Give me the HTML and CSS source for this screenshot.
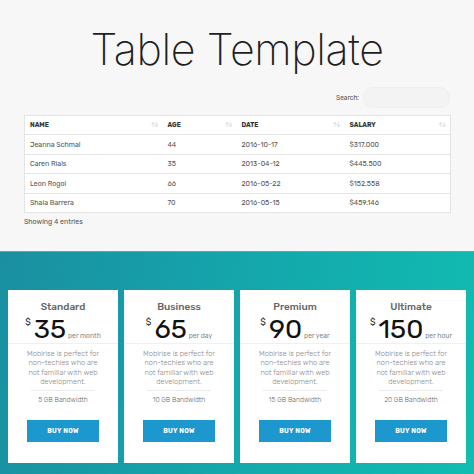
FILE: index.html
```html
<!DOCTYPE html>
<html>
<head>
<meta charset="utf-8">
<link rel="stylesheet" href="styles.css">
</head>
<body>
<section class="top">
  <h1 class="title">Table Template</h1>
  <div class="search-row">
    <span class="search-label">Search:</span>
    <div class="search-input"></div>
  </div>
  <table class="data">
    <thead>
      <tr>
        <th class="c1">NAME<span class="sort">&#8593;&#8595;</span></th>
        <th class="c2">AGE<span class="sort">&#8593;&#8595;</span></th>
        <th class="c3">DATE<span class="sort">&#8593;&#8595;</span></th>
        <th class="c4">SALARY<span class="sort">&#8593;&#8595;</span></th>
      </tr>
    </thead>
    <tbody>
      <tr><td>Jeanna Schmal</td><td>44</td><td>2016-10-17</td><td>$317.000</td></tr>
      <tr><td>Caren Rials</td><td>35</td><td>2013-04-12</td><td>$445.500</td></tr>
      <tr><td>Leon Rogol</td><td>66</td><td>2016-05-22</td><td>$152.558</td></tr>
      <tr><td>Shala Barrera</td><td>70</td><td>2016-05-15</td><td>$459.146</td></tr>
    </tbody>
  </table>
  <div class="info">Showing 4 entries</div>
</section>
<section class="pricing">
  <div class="card">
    <div class="plan">Standard</div>
    <div class="price"><span class="cur">$</span><span class="amount">35</span><span class="per">per month</span></div>
    <div class="desc">Mobirise is perfect for<br>non-techies who are<br>not familiar with web<br>development.</div>
    <div class="feature">5 GB Bandwidth</div>
    <div class="btn">BUY NOW</div>
  </div>
  <div class="card">
    <div class="plan">Business</div>
    <div class="price"><span class="cur">$</span><span class="amount">65</span><span class="per">per day</span></div>
    <div class="desc">Mobirise is perfect for<br>non-techies who are<br>not familiar with web<br>development.</div>
    <div class="feature">10 GB Bandwidth</div>
    <div class="btn">BUY NOW</div>
  </div>
  <div class="card">
    <div class="plan">Premium</div>
    <div class="price"><span class="cur">$</span><span class="amount">90</span><span class="per">per year</span></div>
    <div class="desc">Mobirise is perfect for<br>non-techies who are<br>not familiar with web<br>development.</div>
    <div class="feature">15 GB Bandwidth</div>
    <div class="btn">BUY NOW</div>
  </div>
  <div class="card">
    <div class="plan">Ultimate</div>
    <div class="price"><span class="cur">$</span><span class="amount">150</span><span class="per">per hour</span></div>
    <div class="desc">Mobirise is perfect for<br>non-techies who are<br>not familiar with web<br>development.</div>
    <div class="feature">20 GB Bandwidth</div>
    <div class="btn">BUY NOW</div>
  </div>
</section>
</body>
</html>
```

FILE: styles.css
```css
* { box-sizing: border-box; }
html, body { margin: 0; padding: 0; }
body {
  width: 474px;
  height: 474px;
  overflow: hidden;
  font-family: "Rubik", "Inter", "Roboto", sans-serif;
  background: #f7f7f7;
}
.top {
  background: #f7f7f7;
  padding: 27px 24px 0;
  height: 251px;
}
.title {
  margin: 0;
  font-family: "Inter", sans-serif;
  font-weight: 250;
  font-size: 43px;
  line-height: 45px;
  text-align: center;
  color: #1e1e1e;
  letter-spacing: -0.4px;
}
.search-row {
  margin-top: 15px;
  display: flex;
  justify-content: flex-end;
  align-items: center;
  gap: 4px;
  height: 21px;
}
.search-label {
  font-size: 6.5px;
  color: #555;
}
.search-input {
  width: 87px;
  height: 21px;
  border-radius: 10px;
  background: #f3f3f3;
  border: 1px solid #efefef;
}
.data {
  margin-top: 7px;
  width: 426px;
  border-collapse: collapse;
  background: #fff;
  border: 1px solid #e4e4e4;
  font-size: 7px;
  color: #555;
  table-layout: fixed;
}
.data th, .data td {
  text-align: left;
  padding: 0 5px;
  border-top: 1px solid #e4e4e4;
}
.data th {
  height: 19px;
  font-weight: 700;
  font-size: 6.5px;
  color: #333;
}
.data td { height: 19.5px; }
.c1 { width: 138px; }
.c2 { width: 74px; }
.c3 { width: 108px; }
.c4 { width: 106px; }
.sort {
  float: right;
  color: #ccc;
  font-size: 6px;
  font-weight: 400;
  letter-spacing: -1.5px;
}
.info {
  margin-top: 4px;
  font-size: 7px;
  color: #555;
}
.pricing {
  height: 223px;
  background: linear-gradient(100deg, #1a8fa1 0%, #14a7ac 50%, #11bdb1 100%);
  border-top: 1px solid #3fb3bb;
  padding: 38px 8px 0;
  display: grid;
  grid-template-columns: repeat(4, 110px);
  gap: 6px;
  align-items: start;
}
.card {
  background: #fff;
  height: 173px;
  display: flex;
  flex-direction: column;
  align-items: center;
  padding-top: 10px;
}
.plan {
  font-size: 10px;
  font-weight: 500;
  color: #666;
  line-height: 14px;
}
.price {
  margin-top: 2px;
  display: flex;
  align-items: flex-start;
  width: 100%;
  justify-content: center;
  height: 28px;
  border-bottom: 1px solid #f0f0f0;
}
.cur {
  font-size: 9px;
  color: #222;
  margin-top: 1px;
  margin-right: 3px;
}
.amount {
  font-size: 27px;
  line-height: 26px;
  color: #111;
  font-weight: 400;
}
.per {
  font-size: 6.8px;
  color: #888;
  align-self: flex-end;
  margin-left: 2px;
  margin-bottom: 3px;
}
.desc {
  margin-top: 5px;
  font-size: 7.4px;
  line-height: 9.3px;
  font-weight: 300;
  color: #888;
  text-align: center;
  width: 64px;
  white-space: nowrap;
  display: flex;
  flex-direction: column;
  align-items: center;
  padding-bottom: 4px;
  border-bottom: 1px solid #ebebeb;
}
.feature {
  margin-top: 4px;
  font-size: 6.8px;
  font-weight: 300;
  color: #666;
  line-height: 10px;
}
.btn {
  margin-top: 15px;
  width: 72px;
  height: 22px;
  background: #1c98cf;
  color: #fff;
  font-weight: 700;
  font-size: 6.5px;
  letter-spacing: 0.3px;
  display: flex;
  align-items: center;
  justify-content: center;
}
```
